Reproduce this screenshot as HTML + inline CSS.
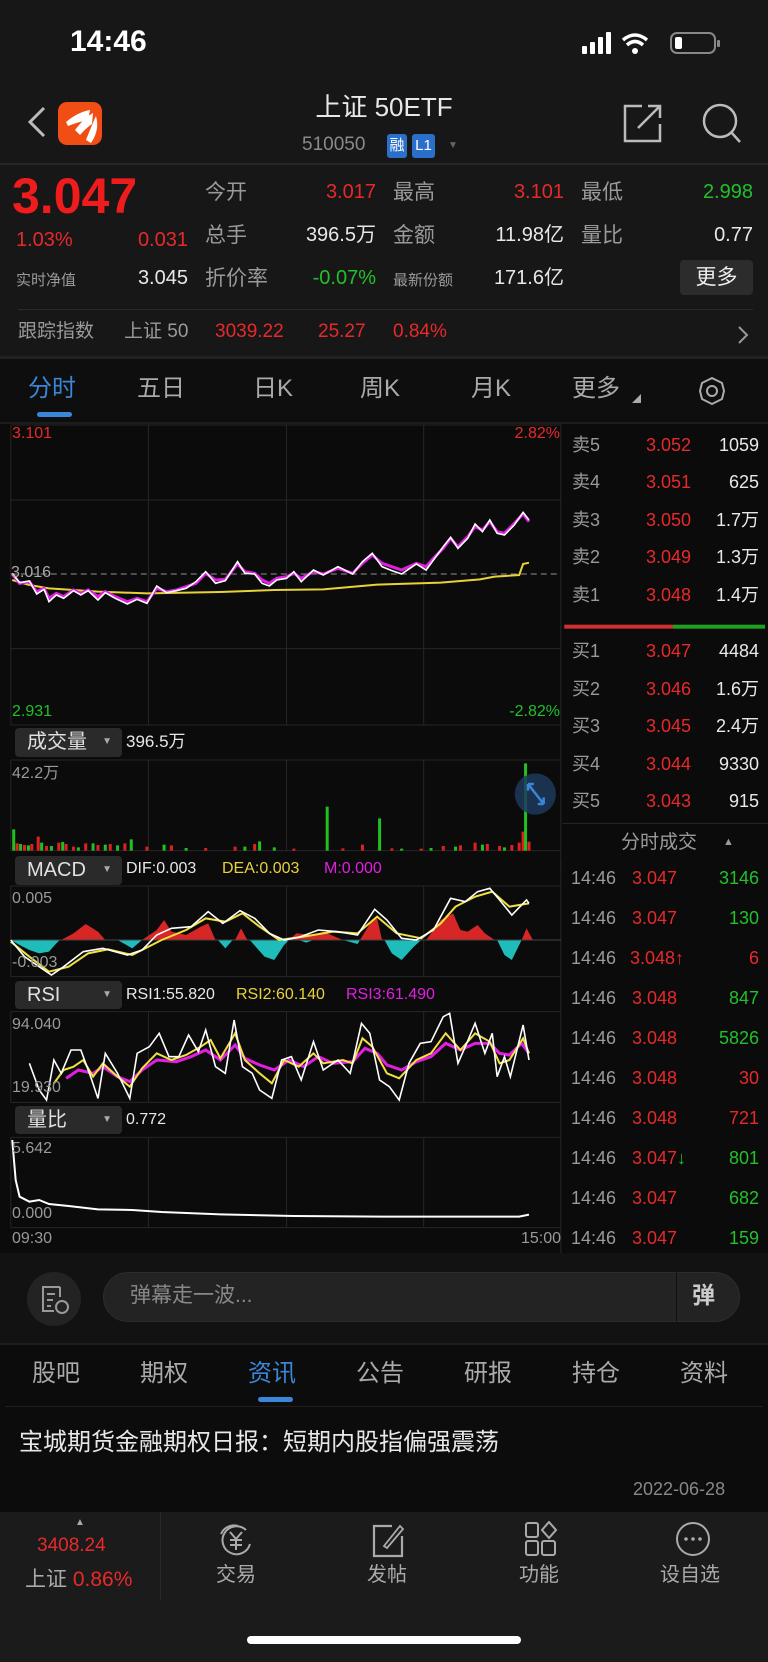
<!DOCTYPE html>
<html><head><meta charset="utf-8">
<style>
*{margin:0;padding:0;box-sizing:border-box}
body{width:768px;height:1662px;background:#0b0b0b;font-family:"Liberation Sans","Noto Sans CJK SC",sans-serif;color:#ddd;position:relative;overflow:hidden;line-height:1.2}
.a{position:absolute;white-space:nowrap}
.r{color:#e8292a}.g{color:#22c02a}.w{color:#e8e8e8}.gr{color:#9a9a9a}
.ra{text-align:right}
.box{position:absolute;background:#2a2a2a;border-radius:4px;color:#e0e0e0;font-size:20px;line-height:28px;padding-left:12px}
.box:after{content:"▼";position:absolute;right:10px;top:0;font-size:10px;color:#aaa}
</style></head><body>
<div class="a" style="left:0;top:0;width:768px;height:358px;background:#171717"></div>
<div class="a w" style="left:70px;top:24px;font-size:30px;font-weight:bold;color:#fff">14:46</div>
<svg class="a" style="left:580px;top:30px" width="150" height="30">
<rect x="2" y="16" width="5" height="8" rx="1" fill="#fff"/><rect x="10" y="12" width="5" height="12" rx="1" fill="#fff"/><rect x="18" y="7" width="5" height="17" rx="1" fill="#fff"/><rect x="26" y="2" width="5" height="22" rx="1" fill="#fff"/>
<path d="M43 10 Q55 0 67 10" stroke="#fff" stroke-width="3.5" fill="none"/><path d="M47 15 Q55 8 63 15" stroke="#fff" stroke-width="3.5" fill="none"/><circle cx="55" cy="21" r="3" fill="#fff"/>
<rect x="91" y="3" width="44" height="20" rx="6" stroke="#888" stroke-width="2" fill="none"/><rect x="95" y="7" width="7" height="12" rx="2" fill="#fff"/><rect x="137" y="10" width="3" height="7" rx="1" fill="#888"/>
</svg>
<svg class="a" style="left:24px;top:104px" width="24" height="36"><path d="M20 4 L6 18 L20 32" stroke="#bbb" stroke-width="3" fill="none"/></svg>
<div class="a" style="left:58px;top:102px;width:44px;height:43px;background:#f04e14;border-radius:9px"></div>
<svg class="a" style="left:58px;top:102px" width="44" height="43"><path d="M8 20 Q20 10 32 8 L30 18 Q20 20 10 24Z M17 28 Q26 16 35 11 L34 22 Q28 26 22 33Z M28 38 Q33 25 38 14 Q42 28 33 41Z" fill="#fff"/></svg>
<div class="a w" style="left:0;width:768px;text-align:center;top:92px;font-size:26px">上证 50ETF</div>
<div class="a gr" style="left:302px;top:134px;font-size:19px;color:#8a8a8a">510050</div>
<div class="a" style="left:387px;top:134px;width:20px;height:24px;background:#2a6fc9;border-radius:3px;color:#fff;font-size:15px;text-align:center;line-height:24px">融</div>
<div class="a" style="left:412px;top:134px;width:23px;height:24px;background:#2a6fc9;border-radius:3px;color:#fff;font-size:15px;text-align:center;line-height:24px">L1</div>
<div class="a" style="left:448px;top:140px;font-size:10px;color:#666">▼</div>
<svg class="a" style="left:622px;top:102px" width="44" height="42"><path d="M20 4 H3 V39 H38 V22" stroke="#bbb" stroke-width="2.5" fill="none"/><path d="M16 26 L38 4 M26 4 H38 V16" stroke="#bbb" stroke-width="2.5" fill="none"/></svg>
<svg class="a" style="left:700px;top:102px" width="44" height="42"><circle cx="20" cy="19" r="16" stroke="#bbb" stroke-width="2.5" fill="none"/><path d="M31 30 L40 40" stroke="#bbb" stroke-width="2.5"/></svg>
<div class="a" style="left:0;top:163px;width:768px;height:2px;background:#262626"></div>

<div class="a r" style="left:12px;top:166px;font-size:50px;font-weight:bold;color:#ee1c1c">3.047</div>
<div class="a r" style="left:16px;top:228px;font-size:20px">1.03%</div>
<div class="a r ra" style="left:100px;width:88px;top:228px;font-size:20px">0.031</div>
<div class="a gr" style="left:16px;top:272px;font-size:15px">实时净值</div>
<div class="a w ra" style="left:100px;width:88px;top:266px;font-size:20px">3.045</div>

<div class="a gr" style="left:205px;top:180px;font-size:21px">今开</div>
<div class="a r ra" style="left:280px;width:96px;top:180px;font-size:20px">3.017</div>
<div class="a gr" style="left:393px;top:180px;font-size:21px">最高</div>
<div class="a r ra" style="left:470px;width:94px;top:180px;font-size:20px">3.101</div>
<div class="a gr" style="left:581px;top:180px;font-size:21px">最低</div>
<div class="a g ra" style="left:650px;width:103px;top:180px;font-size:20px">2.998</div>

<div class="a gr" style="left:205px;top:223px;font-size:21px">总手</div>
<div class="a w ra" style="left:270px;width:106px;top:223px;font-size:20px">396.5万</div>
<div class="a gr" style="left:393px;top:223px;font-size:21px">金额</div>
<div class="a w ra" style="left:460px;width:104px;top:223px;font-size:20px">11.98亿</div>
<div class="a gr" style="left:581px;top:223px;font-size:21px">量比</div>
<div class="a w ra" style="left:650px;width:103px;top:223px;font-size:20px">0.77</div>

<div class="a gr" style="left:205px;top:266px;font-size:21px">折价率</div>
<div class="a g ra" style="left:280px;width:96px;top:266px;font-size:20px">-0.07%</div>
<div class="a gr" style="left:393px;top:272px;font-size:15px">最新份额</div>
<div class="a w ra" style="left:460px;width:104px;top:266px;font-size:20px">171.6亿</div>
<div class="a" style="left:680px;top:260px;width:73px;height:35px;background:#2c2c2c;border-radius:4px;color:#eee;font-size:21px;text-align:center;line-height:35px">更多</div>

<div class="a" style="left:18px;top:309px;width:735px;height:1px;background:#2a2a2a"></div>
<div class="a gr" style="left:18px;top:321px;font-size:19px">跟踪指数</div>
<div class="a gr" style="left:124px;top:321px;font-size:19px">上证 50</div>
<div class="a r" style="left:215px;top:321px;font-size:19px">3039.22</div>
<div class="a r" style="left:318px;top:321px;font-size:19px">25.27</div>
<div class="a r" style="left:393px;top:321px;font-size:19px">0.84%</div>
<svg class="a" style="left:736px;top:324px" width="14" height="22"><path d="M3 3 L11 11 L3 19" stroke="#999" stroke-width="2" fill="none"/></svg>
<div class="a" style="left:0;top:356px;width:768px;height:3px;background:#222"></div>

<div class="a" style="left:0;top:359px;width:768px;height:63px;background:#0e0e0e"></div>
<div class="a" style="left:28px;top:375px;font-size:24px;color:#3a86d8">分时</div>
<div class="a" style="left:37px;top:412px;width:35px;height:5px;border-radius:3px;background:#3a86d8"></div>
<div class="a" style="left:137px;top:375px;font-size:24px;color:#aaa">五日</div>
<div class="a" style="left:253px;top:375px;font-size:24px;color:#aaa">日K</div>
<div class="a" style="left:360px;top:375px;font-size:24px;color:#aaa">周K</div>
<div class="a" style="left:471px;top:375px;font-size:24px;color:#aaa">月K</div>
<div class="a" style="left:572px;top:375px;font-size:24px;color:#aaa">更多</div>
<div class="a" style="left:632px;top:394px;font-size:9px;color:#aaa">◢</div>
<svg class="a" style="left:696px;top:375px" width="32" height="32"><path d="M16 3 L26 8 L28 16 L26 24 L16 29 L6 24 L4 16 L6 8Z" stroke="#aaa" stroke-width="2" fill="none" stroke-linejoin="round"/><circle cx="16" cy="16" r="5" stroke="#aaa" stroke-width="2" fill="none"/></svg>
<div class="a" style="left:0;top:422px;width:768px;height:2px;background:#1c1c1c"></div>

<svg class="a" style="left:0;top:420px" width="768" height="450" viewBox="0 0 1568 1350" preserveAspectRatio="none">
<g stroke="#262626" stroke-width="1" fill="none">
<path vector-effect="non-scaling-stroke" d="M22 15 H1145 M22 240 H1145 M22 686 H1145 M22 915 H1145 M303 15 V915 M585 15 V915 M865 15 V915 M1145 15 V1350 M22 15 V915 M22 1020 H1145 M22 1292 H1145 M303 1020 V1292 M585 1020 V1292 M865 1020 V1292 M22 1020 V1292"/>
<path vector-effect="non-scaling-stroke" d="M1148 1210 H1568"/>
</g>
<path vector-effect="non-scaling-stroke" d="M22 462 H1145" stroke="#777" stroke-width="1.2" stroke-dasharray="6 4" fill="none"/>
<path vector-effect="non-scaling-stroke" d="M25 480 L60 495 L100 505 L200 515 L300 520 L450 516 L560 510 L660 508 L770 494 L900 488 L980 478 L1010 470 L1060 465 L1068 432 L1080 428" stroke="#e8d23a" stroke-width="2" fill="none"/>
<path vector-effect="non-scaling-stroke" d="M25 462 L40 490 L60 485 L75 515 L90 505 L100 535 L115 520 L130 530 L150 510 L165 520 L180 510 L200 530 L215 515 L235 530 L260 545 L280 535 L300 545 L320 505 L340 515 L360 510 L380 500 L400 490 L420 460 L440 480 L460 478 L485 432 L500 455 L520 460 L535 480 L550 490 L565 475 L585 470 L600 460 L615 475 L640 455 L660 462 L690 445 L720 460 L740 430 L760 405 L780 430 L800 440 L820 450 L850 430 L870 440 L885 415 L905 385 L920 355 L935 380 L955 350 L970 320 L985 330 L1000 305 L1015 335 L1030 340 L1050 310 L1068 282 L1080 305" stroke="#e020e0" stroke-width="3" fill="none"/>
<path vector-effect="non-scaling-stroke" d="M25 460 L40 488 L60 483 L75 522 L90 508 L100 545 L115 525 L130 535 L150 512 L165 525 L180 512 L200 540 L215 518 L235 535 L260 552 L280 538 L300 550 L320 498 L340 518 L360 512 L380 505 L400 485 L420 455 L440 490 L460 482 L485 425 L500 460 L520 462 L535 490 L550 498 L565 480 L585 475 L600 455 L615 485 L640 450 L660 465 L690 440 L720 462 L740 425 L760 400 L780 440 L800 452 L820 462 L850 432 L870 450 L885 420 L905 380 L920 352 L935 385 L955 355 L970 312 L985 335 L1000 300 L1015 340 L1030 345 L1050 315 L1068 277 L1080 300" stroke="#fff" stroke-width="1.6" fill="none"/>
<g stroke-width="3">
<path vector-effect="non-scaling-stroke" stroke="#e02020" d="M35 1292V1270 M50 1292V1275 M65 1292V1272 M78 1292V1250 M95 1292V1278 M120 1292V1268 M135 1292V1272 M150 1292V1280 M175 1292V1270 M200 1292V1275 M225 1292V1272 M255 1292V1270 M300 1292V1280 M350 1292V1276 M420 1292V1284 M480 1292V1280 M520 1292V1272 M600 1292V1286 M700 1292V1285 M740 1292V1274 M800 1292V1285 M860 1292V1286 M905 1292V1278 M940 1292V1276 M970 1292V1268 M995 1292V1272 M1020 1292V1278 M1045 1292V1275 M1060 1292V1268 M1068 1292V1235 M1080 1292V1265"/>
<path vector-effect="non-scaling-stroke" stroke="#20c020" d="M28 1292V1228 M42 1292V1272 M58 1292V1276 M85 1292V1268 M105 1292V1278 M128 1292V1266 M160 1292V1282 M190 1292V1270 M215 1292V1274 M240 1292V1276 M268 1292V1258 M335 1292V1274 M380 1292V1284 M500 1292V1280 M530 1292V1264 M560 1292V1282 M668 1292V1160 M775 1292V1195 M820 1292V1286 M880 1292V1284 M930 1292V1280 M985 1292V1274 M1030 1292V1282 M1073 1292V1030"/>
</g>
<ellipse cx="1093" cy="1122" rx="42" ry="62" fill="#1d3a5c" opacity="0.85"/>
<path vector-effect="non-scaling-stroke" d="M1078 1092 L1110 1152 M1078 1092 V1112 M1078 1092 H1090 M1110 1152 V1132 M1110 1152 H1098" stroke="#3a86d8" stroke-width="2.5" fill="none"/>
<rect x="1152" y="614" width="222" height="12" fill="#d03030"/>
<rect x="1374" y="614" width="188" height="12" fill="#1fa01f"/>
</svg>

<div class="a r" style="left:12px;top:424px;font-size:16px">3.101</div>
<div class="a r ra" style="left:480px;width:80px;top:424px;font-size:16px">2.82%</div>
<div class="a" style="left:11px;top:563px;font-size:16px;color:#aaa">3.016</div>
<div class="a g" style="left:12px;top:702px;font-size:16px">2.931</div>
<div class="a g ra" style="left:480px;width:80px;top:702px;font-size:16px">-2.82%</div>
<div class="box" style="left:15px;top:728px;width:107px;height:29px">成交量</div>
<div class="a w" style="left:126px;top:732px;font-size:17px">396.5万</div>
<div class="a" style="left:12px;top:764px;font-size:16px;color:#999">42.2万</div>

<div class="a gr" style="left:572px;top:435px;font-size:18px">卖5</div><div class="a r ra" style="left:600px;width:91px;top:435px;font-size:18px">3.052</div><div class="a w ra" style="left:690px;width:69px;top:435px;font-size:18px">1059</div>
<div class="a gr" style="left:572px;top:472px;font-size:18px">卖4</div><div class="a r ra" style="left:600px;width:91px;top:472px;font-size:18px">3.051</div><div class="a w ra" style="left:690px;width:69px;top:472px;font-size:18px">625</div>
<div class="a gr" style="left:572px;top:510px;font-size:18px">卖3</div><div class="a r ra" style="left:600px;width:91px;top:510px;font-size:18px">3.050</div><div class="a w ra" style="left:690px;width:69px;top:510px;font-size:18px">1.7万</div>
<div class="a gr" style="left:572px;top:547px;font-size:18px">卖2</div><div class="a r ra" style="left:600px;width:91px;top:547px;font-size:18px">3.049</div><div class="a w ra" style="left:690px;width:69px;top:547px;font-size:18px">1.3万</div>
<div class="a gr" style="left:572px;top:585px;font-size:18px">卖1</div><div class="a r ra" style="left:600px;width:91px;top:585px;font-size:18px">3.048</div><div class="a w ra" style="left:690px;width:69px;top:585px;font-size:18px">1.4万</div>
<div class="a gr" style="left:572px;top:641px;font-size:18px">买1</div><div class="a r ra" style="left:600px;width:91px;top:641px;font-size:18px">3.047</div><div class="a w ra" style="left:690px;width:69px;top:641px;font-size:18px">4484</div>
<div class="a gr" style="left:572px;top:679px;font-size:18px">买2</div><div class="a r ra" style="left:600px;width:91px;top:679px;font-size:18px">3.046</div><div class="a w ra" style="left:690px;width:69px;top:679px;font-size:18px">1.6万</div>
<div class="a gr" style="left:572px;top:716px;font-size:18px">买3</div><div class="a r ra" style="left:600px;width:91px;top:716px;font-size:18px">3.045</div><div class="a w ra" style="left:690px;width:69px;top:716px;font-size:18px">2.4万</div>
<div class="a gr" style="left:572px;top:754px;font-size:18px">买4</div><div class="a r ra" style="left:600px;width:91px;top:754px;font-size:18px">3.044</div><div class="a w ra" style="left:690px;width:69px;top:754px;font-size:18px">9330</div>
<div class="a gr" style="left:572px;top:791px;font-size:18px">买5</div><div class="a r ra" style="left:600px;width:91px;top:791px;font-size:18px">3.043</div><div class="a w ra" style="left:690px;width:69px;top:791px;font-size:18px">915</div>
<div class="a gr" style="left:621px;top:832px;font-size:19px">分时成交</div>
<div class="a gr" style="left:723px;top:836px;font-size:11px">▲</div>

<svg class="a" style="left:0;top:860px" width="768" height="400" viewBox="0 0 1568 1200" preserveAspectRatio="none">
<g fill="none" stroke="#262626">
<path vector-effect="non-scaling-stroke" d="M22 78 H1145 M22 350 H1145 M22 455 H1145 M22 727 H1145 M22 832 H1145 M22 1103 H1145 M303 78 V350 M585 78 V350 M865 78 V350 M303 455 V727 M585 455 V727 M865 455 V727 M303 832 V1103 M585 832 V1103 M865 832 V1103 M22 78 V350 M22 455 V727 M22 832 V1103 M1145 0 V1180"/>
</g>
<path d="M125 240 L150 220 L175 192 L200 215 L215 240 Z M290 240 L320 210 L335 180 L350 215 L380 225 L410 200 L425 190 L440 240 Z M480 240 L492 205 L505 240 Z M590 240 L605 220 L640 225 L660 215 L700 240 Z M735 240 L760 180 L770 175 L780 240 Z M870 240 L900 180 L925 160 L940 210 L955 215 L975 195 L990 220 L1010 240 Z M1065 240 L1075 205 L1088 240 Z" fill="#d62626"/>
<path d="M22 240 L40 255 L60 270 L80 280 L100 275 L115 250 L122 240 Z M240 240 L270 265 L290 240 Z M445 240 L460 265 L475 240 Z M510 240 L540 290 L560 300 L580 255 L590 240 Z M610 240 L625 248 L640 240 Z M700 240 L730 252 L735 240 Z M785 240 L800 280 L820 300 L845 260 L860 240 Z M1015 240 L1030 285 L1045 300 L1060 255 L1065 240 Z" fill="#1fbcbc"/>
<path vector-effect="non-scaling-stroke" d="M22 240 H1145" stroke="#444" fill="none"/>
<path vector-effect="non-scaling-stroke" d="M22 245 L60 290 L100 335 L140 320 L180 280 L220 268 L270 285 L330 240 L380 210 L420 175 L460 185 L495 160 L530 200 L570 240 L620 230 L680 215 L730 220 L770 170 L810 220 L860 235 L900 190 L930 140 L970 110 L1005 95 L1040 140 L1080 130" stroke="#f0e040" stroke-width="2" fill="none"/>
<path vector-effect="non-scaling-stroke" d="M22 240 L50 290 L80 320 L105 345 L130 320 L170 275 L210 265 L260 285 L290 270 L320 225 L350 205 L390 200 L425 155 L455 190 L490 152 L520 175 L550 220 L580 240 L610 232 L650 210 L690 215 L730 225 L765 148 L790 180 L820 235 L850 240 L885 210 L920 115 L950 125 L975 95 L1000 85 L1020 120 L1045 165 L1075 120 L1080 130" stroke="#fff" stroke-width="1.6" fill="none"/>
<path vector-effect="non-scaling-stroke" d="M135 655 L160 630 L190 640 L210 620 L240 650 L265 665 L290 630 L320 600 L360 605 L390 590 L420 570 L450 600 L480 555 L500 595 L530 615 L560 630 L590 600 L620 620 L650 590 L680 610 L720 605 L745 565 L770 580 L790 615 L820 630 L850 605 L880 590 L910 550 L940 570 L970 550 L1000 550 L1020 580 L1040 585 L1065 550 L1080 580" stroke="#e020e0" stroke-width="3" fill="none"/>
<path vector-effect="non-scaling-stroke" d="M110 670 L130 630 L150 620 L170 600 L190 650 L210 610 L240 650 L265 680 L290 625 L320 580 L350 600 L380 585 L410 560 L430 540 L450 595 L480 520 L500 600 L530 640 L555 670 L580 600 L610 620 L640 580 L660 610 L700 600 L720 610 L740 535 L760 560 L790 640 L815 655 L850 600 L880 580 L910 520 L940 570 L970 520 L1000 545 L1020 610 L1040 600 L1068 535 L1080 580" stroke="#f0e040" stroke-width="2" fill="none"/>
<path vector-effect="non-scaling-stroke" d="M60 610 L80 690 L95 720 L110 600 L125 640 L145 570 L165 570 L185 650 L200 715 L215 580 L240 640 L265 715 L280 580 L305 560 L325 520 L345 590 L365 590 L385 525 L405 575 L420 510 L440 620 L460 640 L478 480 L495 620 L515 640 L530 690 L555 715 L575 600 L595 590 L615 660 L640 545 L660 630 L690 600 L715 640 L738 490 L755 520 L775 660 L795 680 L815 720 L835 610 L858 550 L880 545 L905 470 L918 460 L935 610 L950 560 L970 490 L990 580 L1005 520 L1015 650 L1030 590 L1042 650 L1068 495 L1080 600" stroke="#fff" stroke-width="1.6" fill="none"/>
<path vector-effect="non-scaling-stroke" d="M25 840 L32 960 L40 1010 L60 1025 L80 1020 L100 1032 L140 1038 L200 1048 L270 1050 L330 1056 L450 1063 L600 1068 L800 1070 L1060 1070 L1080 1064" stroke="#fff" stroke-width="2" fill="none"/>
</svg>

<div class="box" style="left:15px;top:856px;width:107px;height:29px">MACD</div>
<div class="a" style="left:126px;top:859px;font-size:16px;color:#e8e8e8">DIF:0.003</div>
<div class="a" style="left:222px;top:859px;font-size:16px;color:#e8d23a">DEA:0.003</div>
<div class="a" style="left:324px;top:859px;font-size:16px;color:#e020e0">M:0.000</div>
<div class="a" style="left:12px;top:889px;font-size:16px;color:#999">0.005</div>
<div class="a" style="left:12px;top:953px;font-size:16px;color:#999">-0.003</div>
<div class="box" style="left:15px;top:981px;width:107px;height:28px">RSI</div>
<div class="a" style="left:126px;top:985px;font-size:16px;color:#e8e8e8">RSI1:55.820</div>
<div class="a" style="left:236px;top:985px;font-size:16px;color:#e8d23a">RSI2:60.140</div>
<div class="a" style="left:346px;top:985px;font-size:16px;color:#e020e0">RSI3:61.490</div>
<div class="a" style="left:12px;top:1015px;font-size:16px;color:#999">94.040</div>
<div class="a" style="left:12px;top:1078px;font-size:16px;color:#999">19.930</div>
<div class="box" style="left:15px;top:1106px;width:107px;height:28px">量比</div>
<div class="a w" style="left:126px;top:1110px;font-size:16px">0.772</div>
<div class="a" style="left:12px;top:1139px;font-size:16px;color:#999">5.642</div>
<div class="a" style="left:12px;top:1204px;font-size:16px;color:#999">0.000</div>
<div class="a" style="left:12px;top:1229px;font-size:16px;color:#999">09:30</div>
<div class="a ra" style="left:500px;width:61px;top:1229px;font-size:16px;color:#999">15:00</div>

<div class="a gr" style="left:571px;top:868px;font-size:18px">14:46</div><div class="a r" style="left:632px;top:868px;font-size:18px">3.047</div><div class="a g ra" style="left:690px;width:69px;top:868px;font-size:18px">3146</div>
<div class="a gr" style="left:571px;top:908px;font-size:18px">14:46</div><div class="a r" style="left:632px;top:908px;font-size:18px">3.047</div><div class="a g ra" style="left:690px;width:69px;top:908px;font-size:18px">130</div>
<div class="a gr" style="left:571px;top:948px;font-size:18px">14:46</div><div class="a r" style="left:630px;top:948px;font-size:18px">3.048↑</div><div class="a r ra" style="left:690px;width:69px;top:948px;font-size:18px">6</div>
<div class="a gr" style="left:571px;top:988px;font-size:18px">14:46</div><div class="a r" style="left:632px;top:988px;font-size:18px">3.048</div><div class="a g ra" style="left:690px;width:69px;top:988px;font-size:18px">847</div>
<div class="a gr" style="left:571px;top:1028px;font-size:18px">14:46</div><div class="a r" style="left:632px;top:1028px;font-size:18px">3.048</div><div class="a g ra" style="left:690px;width:69px;top:1028px;font-size:18px">5826</div>
<div class="a gr" style="left:571px;top:1068px;font-size:18px">14:46</div><div class="a r" style="left:632px;top:1068px;font-size:18px">3.048</div><div class="a r ra" style="left:690px;width:69px;top:1068px;font-size:18px">30</div>
<div class="a gr" style="left:571px;top:1108px;font-size:18px">14:46</div><div class="a r" style="left:632px;top:1108px;font-size:18px">3.048</div><div class="a r ra" style="left:690px;width:69px;top:1108px;font-size:18px">721</div>
<div class="a gr" style="left:571px;top:1148px;font-size:18px">14:46</div><div class="a r" style="left:632px;top:1148px;font-size:18px">3.047<span class="g">↓</span></div><div class="a g ra" style="left:690px;width:69px;top:1148px;font-size:18px">801</div>
<div class="a gr" style="left:571px;top:1188px;font-size:18px">14:46</div><div class="a r" style="left:632px;top:1188px;font-size:18px">3.047</div><div class="a g ra" style="left:690px;width:69px;top:1188px;font-size:18px">682</div>
<div class="a gr" style="left:571px;top:1228px;font-size:18px">14:46</div><div class="a r" style="left:632px;top:1228px;font-size:18px">3.047</div><div class="a g ra" style="left:690px;width:69px;top:1228px;font-size:18px">159</div>

<div class="a" style="left:0;top:1253px;width:768px;height:92px;background:#121212"></div>
<div class="a" style="left:27px;top:1272px;width:54px;height:54px;border-radius:50%;background:#232323"></div>
<svg class="a" style="left:38px;top:1283px" width="34" height="34"><path d="M22 4 H5 V28 H16" stroke="#999" stroke-width="2" fill="none"/><path d="M22 4 V14 M9 11 H17 M9 17 H15 M9 23 H13" stroke="#999" stroke-width="2"/><circle cx="24" cy="24" r="6" stroke="#999" stroke-width="2" fill="none"/></svg>
<div class="a" style="left:103px;top:1272px;width:637px;height:50px;border-radius:25px;background:#232323;border:1px solid #2c2c2c"></div>
<div class="a" style="left:676px;top:1272px;width:1px;height:50px;background:#111"></div>
<div class="a" style="left:130px;top:1283px;font-size:21px;color:#888">弹幕走一波...</div>
<div class="a" style="left:692px;top:1282px;font-size:23px;font-weight:bold;color:#ccc">弹</div>
<div class="a" style="left:0;top:1343px;width:768px;height:2px;background:#1e1e1e"></div>

<div class="a" style="left:0;top:1345px;width:768px;height:168px;background:#0c0c0c"></div>
<div class="a" style="left:32px;top:1360px;font-size:24px;color:#aaa">股吧</div>
<div class="a" style="left:140px;top:1360px;font-size:24px;color:#aaa">期权</div>
<div class="a" style="left:248px;top:1360px;font-size:24px;color:#3a86d8">资讯</div>
<div class="a" style="left:258px;top:1397px;width:35px;height:5px;border-radius:3px;background:#3a86d8"></div>
<div class="a" style="left:356px;top:1360px;font-size:24px;color:#aaa">公告</div>
<div class="a" style="left:464px;top:1360px;font-size:24px;color:#aaa">研报</div>
<div class="a" style="left:572px;top:1360px;font-size:24px;color:#aaa">持仓</div>
<div class="a" style="left:680px;top:1360px;font-size:24px;color:#aaa">资料</div>
<div class="a" style="left:5px;top:1406px;width:758px;height:1px;background:#1f1f1f"></div>
<div class="a" style="left:19px;top:1429px;font-size:24px;color:#e8e8e8">宝城期货金融期权日报：短期内股指偏强震荡</div>
<div class="a" style="left:633px;top:1479px;font-size:18px;color:#888">2022-06-28</div>

<div class="a" style="left:0;top:1512px;width:768px;height:150px;background:#1b1b1b"></div>
<div class="a" style="left:160px;top:1512px;width:1px;height:88px;background:#2a2a2a"></div>
<div class="a" style="left:75px;top:1517px;font-size:10px;color:#aaa">▲</div>
<div class="a r" style="left:37px;top:1535px;font-size:19px">3408.24</div>
<div class="a" style="left:25px;top:1567px;font-size:21px;color:#aaa">上证 <span class="r">0.86%</span></div>
<svg class="a" style="left:216px;top:1522px" width="40" height="36"><path d="M30 8 A14 14 0 1 0 34 22" stroke="#aaa" stroke-width="2" fill="none"/><path d="M5 12 A14 14 0 0 1 22 4" stroke="#aaa" stroke-width="2" fill="none"/><path d="M14 10 L20 17 L26 10 M20 17 V28 M14 18 H26 M14 23 H26" stroke="#aaa" stroke-width="2" fill="none"/></svg>
<div class="a" style="left:216px;top:1563px;font-size:20px;color:#aaa">交易</div>
<svg class="a" style="left:370px;top:1522px" width="36" height="36"><path d="M22 4 H4 V34 H32 V14" stroke="#aaa" stroke-width="2.2" fill="none"/><path d="M14 24 L30 4 L33 7 L17 26Z" stroke="#aaa" stroke-width="1.8" fill="none"/></svg>
<div class="a" style="left:367px;top:1563px;font-size:20px;color:#aaa">发帖</div>
<svg class="a" style="left:524px;top:1521px" width="34" height="36"><rect x="2" y="2" width="12" height="14" rx="2" stroke="#aaa" stroke-width="2" fill="none"/><path d="M25 1 L32 9 L25 17 L18 9Z" stroke="#aaa" stroke-width="2" fill="none"/><rect x="2" y="20" width="12" height="14" rx="2" stroke="#aaa" stroke-width="2" fill="none"/><rect x="18" y="20" width="13" height="14" rx="2" stroke="#aaa" stroke-width="2" fill="none"/></svg>
<div class="a" style="left:519px;top:1563px;font-size:20px;color:#aaa">功能</div>
<svg class="a" style="left:674px;top:1520px" width="38" height="38"><circle cx="19" cy="19" r="16" stroke="#aaa" stroke-width="2" fill="none"/><circle cx="12" cy="19" r="1.8" fill="#aaa"/><circle cx="19" cy="19" r="1.8" fill="#aaa"/><circle cx="26" cy="19" r="1.8" fill="#aaa"/></svg>
<div class="a" style="left:660px;top:1563px;font-size:20px;color:#aaa">设自选</div>
<div class="a" style="left:247px;top:1636px;width:274px;height:8px;border-radius:4px;background:#fff"></div>
</body></html>
